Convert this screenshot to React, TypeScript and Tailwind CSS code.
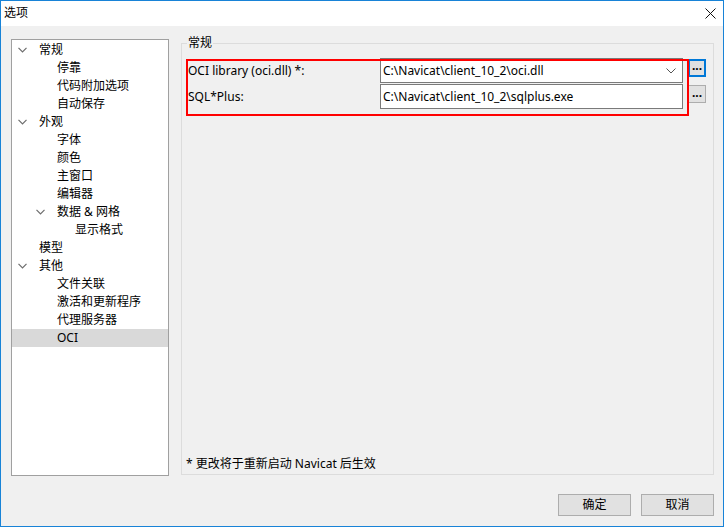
import React from "react";

type Node = { level: 0 | 1 | 2; text: string; open?: boolean; selected?: boolean };

const tree: Node[] = [
  { level: 0, text: "常规", open: true },
  { level: 1, text: "停靠" },
  { level: 1, text: "代码附加选项" },
  { level: 1, text: "自动保存" },
  { level: 0, text: "外观", open: true },
  { level: 1, text: "字体" },
  { level: 1, text: "颜色" },
  { level: 1, text: "主窗口" },
  { level: 1, text: "编辑器" },
  { level: 1, text: "数据 & 网格", open: true },
  { level: 2, text: "显示格式" },
  { level: 0, text: "模型" },
  { level: 0, text: "其他", open: true },
  { level: 1, text: "文件关联" },
  { level: 1, text: "激活和更新程序" },
  { level: 1, text: "代理服务器" },
  { level: 1, text: "OCI", selected: true },
];

const indent = ["pl-[3px]", "pl-[21px]", "pl-[39px]"];

function Chevron() {
  return (
    <svg width="9" height="6" viewBox="0 0 9 6" className="ml-[3px]">
      <path d="M0.5 0.8 L4.5 4.8 L8.5 0.8" fill="none" stroke="#6d6d6d" strokeWidth="1.2" />
    </svg>
  );
}

function TreeRow({ node }: { node: Node }) {
  return (
    <div
      className={`flex h-[18px] items-center ${indent[node.level]} ${
        node.selected ? "bg-[#d9d9d9]" : ""
      }`}
    >
      <div className="flex w-[24px] items-center">{node.open && <Chevron />}</div>
      <span className="leading-[18px]">{node.text}</span>
    </div>
  );
}

function Dots({ focused }: { focused?: boolean }) {
  return (
    <button
      className={`mt-[1px] flex h-[18px] w-[18px] items-end justify-center bg-[#e1e1e1] pb-[3px] text-[12px] font-bold leading-none ${
        focused ? "border-2 border-[#0078d7]" : "border border-[#adadad]"
      }`}
    >
      ...
    </button>
  );
}

export default function App() {
  return (
    <div className="h-[529px] w-[726px] bg-white font-['Noto_Sans','Noto_Sans_CJK_SC',sans-serif] text-[12px] text-black">
      <div className="flex h-[527px] w-[724px] flex-col border border-[#1883d7]">
        {/* Title bar */}
        <div className="flex h-[25px] items-center justify-between bg-white pb-[1px] pl-[3px] pr-[7px]">
          <span className="leading-none">选项</span>
          <svg width="11" height="11" viewBox="0 0 11 11">
            <path d="M0.5 0.5 L10.5 10.5 M10.5 0.5 L0.5 10.5" stroke="#111" strokeWidth="1" />
          </svg>
        </div>

        {/* Body */}
        <div className="flex flex-1 flex-col bg-[#f0f0f0] pl-[10px] pr-[9px] pt-[13px]">
          <div className="flex gap-[12px]">
            {/* Tree */}
            <div className="h-[437px] w-[158px] border border-[#a0a0a0] bg-white pt-[1px]">
              {tree.map((n) => (
                <TreeRow key={n.text} node={n} />
              ))}
            </div>

            {/* Group box */}
            <div className="relative mt-[4px] flex h-[432px] w-[533px] flex-col border border-[#dcdcdc]">
              <span className="absolute left-[5px] top-[-9px] bg-[#f0f0f0] px-[1px] leading-[16px]">
                常规
              </span>

              <div className="flex flex-col gap-[1px] pt-[14px]">
                <div className="flex items-start">
                  <div className="flex h-[25px] w-[198px] items-center pl-[6px]">
                    OCI library (oci.dll) *:
                  </div>
                  <div className="flex h-[25px] w-[303px] items-center justify-between border border-[#7a7a7a] bg-white pl-[2px] pr-[6px]">
                    <span>C:\Navicat\client_10_2\oci.dll</span>
                    <svg width="10" height="6" viewBox="0 0 10 6">
                      <path d="M0.5 0.5 L5 5 L9.5 0.5" fill="none" stroke="#555" strokeWidth="1" />
                    </svg>
                  </div>
                  <div className="ml-[5px]">
                    <Dots focused />
                  </div>
                </div>
                <div className="flex items-start">
                  <div className="flex h-[25px] w-[198px] items-center pl-[6px]">SQL*Plus:</div>
                  <div className="flex h-[25px] w-[303px] items-center border border-[#7a7a7a] bg-white pl-[2px]">
                    C:\Navicat\client_10_2\sqlplus.exe
                  </div>
                  <div className="ml-[5px]">
                    <Dots />
                  </div>
                </div>
              </div>

              {/* Red annotation */}
              <div className="pointer-events-none absolute left-[4px] top-[15px] h-[57px] w-[503px] border-2 border-[#ff0000]" />

              <div className="mt-auto pb-[2px] pl-[4px] leading-[16px]">
                * 更改将于重新启动 Navicat 后生效
              </div>
            </div>
          </div>

          {/* Buttons */}
          <div className="mt-[18px] flex justify-end gap-[10px]">
            <button className="h-[22px] w-[73px] border border-[#adadad] bg-[#e1e1e1]">确定</button>
            <button className="h-[22px] w-[73px] border border-[#adadad] bg-[#e1e1e1]">取消</button>
          </div>
        </div>
      </div>
    </div>
  );
}
